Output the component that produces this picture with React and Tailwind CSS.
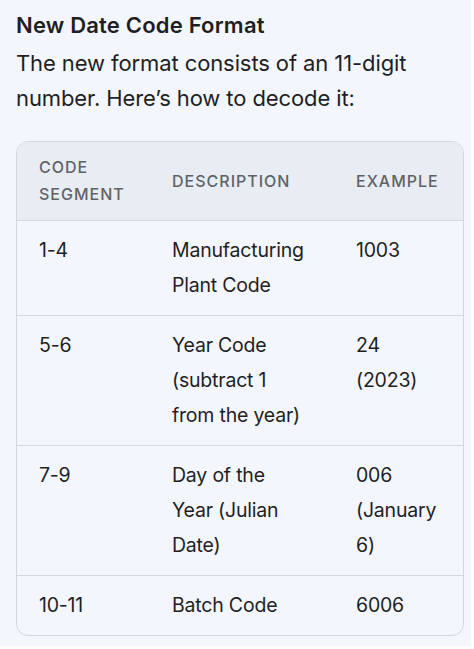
import React from "react";

const rows = [
  ["1-4", "Manufacturing Plant Code", "1003"],
  ["5-6", "Year Code (subtract 1 from the year)", "24 (2023)"],
  ["7-9", "Day of the Year (Julian Date)", "006 (January 6)"],
  ["10-11", "Batch Code", "6006"],
];

export default function App() {
  return (
    <div className="w-[474px] h-[649px] bg-white">
      <div
        className="w-[471px] h-[646px] bg-[#f3f6fc] px-4 pt-[10px] text-[#1f1f1f]"
        style={{ fontFamily: "Inter, 'Noto Sans', sans-serif" }}
      >
        <h2 className="text-[22px] leading-[30px] font-semibold tracking-[0.2px]">
          New Date Code Format
        </h2>
        <p className="mt-[6px] text-[22px] leading-[35px] tracking-[-0.1px]">
          The new format consists of an 11-digit number. Here’s how to decode it:
        </p>
        <div className="mt-[25px] w-[448px] rounded-[12px] border border-[#d3d8df] overflow-hidden">
          <table className="w-full border-collapse table-fixed">
            <colgroup>
              <col className="w-[133px]" />
              <col className="w-[184px]" />
              <col />
            </colgroup>
            <thead>
              <tr className="bg-[#e8ecf3] border-b border-[#d3d8df]">
                <th className="text-left align-middle pl-[22px] pr-2 py-3 text-[16px] leading-[27px] font-medium tracking-[1px] text-[#5f6368] uppercase">
                  Code Segment
                </th>
                <th className="text-left align-middle pl-[22px] pr-2 py-3 text-[16px] leading-[27px] font-medium tracking-[1px] text-[#5f6368] uppercase">
                  Description
                </th>
                <th className="text-left align-middle pl-[22px] pr-2 py-3 text-[16px] leading-[27px] font-medium tracking-[1px] text-[#5f6368] uppercase">
                  Example
                </th>
              </tr>
            </thead>
            <tbody>
              {rows.map((r, i) => (
                <tr
                  key={i}
                  className={i < rows.length - 1 ? "border-b border-[#d3d8df]" : ""}
                >
                  {r.map((c, j) => (
                    <td
                      key={j}
                      className="align-top pl-[22px] pr-[28px] py-3 text-[19.5px] leading-[35px] tracking-[-0.2px]"
                    >
                      {c}
                    </td>
                  ))}
                </tr>
              ))}
            </tbody>
          </table>
        </div>
      </div>
    </div>
  );
}
